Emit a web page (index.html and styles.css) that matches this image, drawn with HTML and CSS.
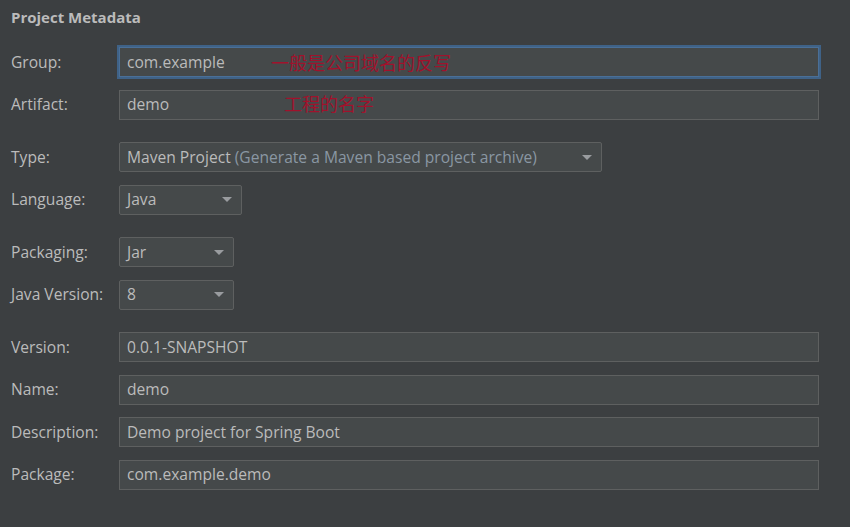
FILE: index.html
```html
<!DOCTYPE html>
<html lang="en">
<head>
<meta charset="utf-8">
<title>Project Metadata</title>
<link rel="stylesheet" href="styles.css">
</head>
<body>
<div class="panel">
  <h1 class="title">Project Metadata</h1>

  <div class="group">
    <div class="row">
      <span class="label">Group:</span>
      <div class="field focused">
        <span class="value">com.example</span>
        <span class="note note-group">一般是公司域名的反写</span>
      </div>
    </div>
    <div class="row">
      <span class="label">Artifact:</span>
      <div class="field">
        <span class="value">demo</span>
        <span class="note note-artifact">工程的名字</span>
      </div>
    </div>
  </div>

  <div class="group">
    <div class="row">
      <span class="label">Type:</span>
      <div class="select w-type">
        <span class="value">Maven Project <span class="hint">(Generate a Maven based project archive)</span></span>
        <span class="arrow"></span>
      </div>
    </div>
    <div class="row">
      <span class="label">Language:</span>
      <div class="select w-lang">
        <span class="value">Java</span>
        <span class="arrow"></span>
      </div>
    </div>
  </div>

  <div class="group">
    <div class="row">
      <span class="label">Packaging:</span>
      <div class="select w-small">
        <span class="value">Jar</span>
        <span class="arrow"></span>
      </div>
    </div>
    <div class="row">
      <span class="label">Java Version:</span>
      <div class="select w-small">
        <span class="value">8</span>
        <span class="arrow"></span>
      </div>
    </div>
  </div>

  <div class="group">
    <div class="row">
      <span class="label">Version:</span>
      <div class="field"><span class="value">0.0.1-SNAPSHOT</span></div>
    </div>
    <div class="row">
      <span class="label">Name:</span>
      <div class="field"><span class="value">demo</span></div>
    </div>
    <div class="row">
      <span class="label">Description:</span>
      <div class="field"><span class="value">Demo project for Spring Boot</span></div>
    </div>
    <div class="row">
      <span class="label">Package:</span>
      <div class="field"><span class="value">com.example.demo</span></div>
    </div>
  </div>
</div>
</body>
</html>
```
FILE: styles.css
```css
html, body {
  margin: 0;
  padding: 0;
  background: #3c3f41;
}

body {
  width: 850px;
  height: 527px;
  overflow: hidden;
  font-family: "Open Sans", "Noto Sans", "Noto Sans CJK SC", sans-serif;
  font-size: 15.6px;
  color: #bbbbbb;
}

.panel {
  padding: 7px 31px 0 11px;
}

.title {
  margin: 0;
  font-size: 15px;
  line-height: 20px;
  font-weight: 700;
  color: #bbbbbb;
}

.group {
  display: flex;
  flex-direction: column;
  gap: 12.5px;
  margin-top: 22.5px;
}

.title + .group {
  margin-top: 20px;
}

.row {
  display: grid;
  grid-template-columns: 108px 1fr;
  align-items: center;
  height: 30px;
  line-height: 20px;
}

.label {
  color: #bbbbbb;
  white-space: nowrap;
  margin-top: -1px;
}

.field,
.select {
  position: relative;
  box-sizing: border-box;
  height: 30px;
  background: #45494a;
  border: 1px solid #5e6060;
  display: flex;
  align-items: center;
  padding: 0 7px;
  white-space: nowrap;
}

.value {
  margin-top: -1px;
}

.field.focused {
  border-color: #4a6f97;
  box-shadow: 0 0 0 2px #3f6287;
}

.select {
  justify-content: space-between;
  border-radius: 2px;
  padding-right: 9px;
}

.w-type { width: 483px; }
.w-lang { width: 123px; }
.w-small { width: 115px; }

.hint {
  color: #8a97a3;
}

.arrow {
  width: 0;
  height: 0;
  border-left: 5px solid transparent;
  border-right: 5px solid transparent;
  border-top: 5px solid #999c9f;
}

.note {
  position: absolute;
  top: 50%;
  transform: translateY(-50%);
  font-family: "Noto Sans CJK SC", sans-serif;
  font-size: 18px;
  font-weight: 400;
  color: #a0122c;
  line-height: 1;
}

.note-group { left: 151px; }
.note-artifact { left: 164px; margin-top: -2px; }
```
